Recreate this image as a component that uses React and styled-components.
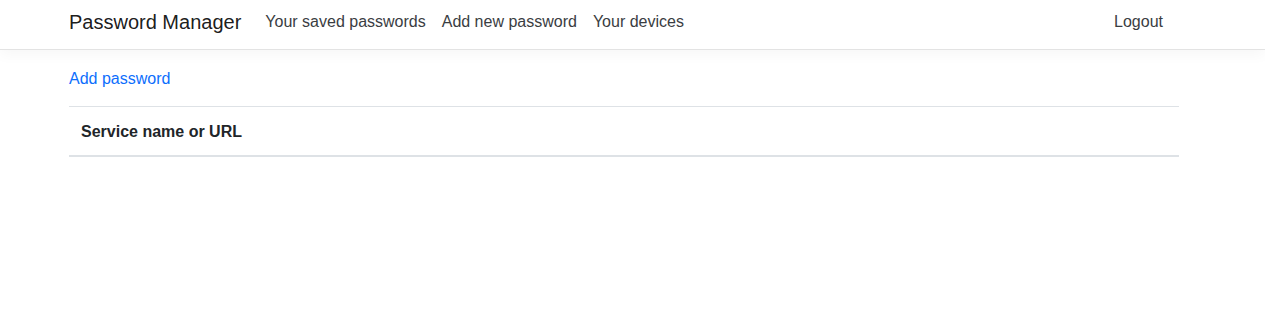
import React from 'react';
import styled, { createGlobalStyle } from 'styled-components';

const GlobalStyle = createGlobalStyle`
  html, body {
    margin: 0;
    padding: 0;
    background: #fff;
    font-family: "Liberation Sans", Arial, sans-serif;
    font-size: 16px;
    line-height: 1.5;
    color: #212529;
  }
  * { box-sizing: border-box; }
`;

const Header = styled.header`
  height: 50px;
  border-bottom: 1px solid #e3e3e3;
  box-shadow: 0 4px 14px rgba(0, 0, 0, 0.04);
  background: #fff;
`;

const Container = styled.div`
  width: 1110px;
  margin-left: 69px;
`;

const NavBar = styled(Container)`
  display: flex;
  align-items: center;
  height: 44px;
`;

const Brand = styled.a`
  font-size: 20px;
  line-height: 30px;
  color: rgba(0, 0, 0, 0.9);
  margin-right: 16px;
  text-decoration: none;
  cursor: pointer;
`;

const NavList = styled.ul`
  display: flex;
  list-style: none;
  margin: 0;
  padding: 0;
  flex: ${({ grow }) => (grow ? 1 : 'none')};
  justify-content: ${({ end }) => (end ? 'flex-end' : 'flex-start')};
  margin-right: ${({ end }) => (end ? '8px' : '0')};
`;

const NavLink = styled.a`
  display: block;
  padding: 0 8px;
  color: #3a3d42;
  text-decoration: none;
  cursor: pointer;
`;

const Main = styled(Container)`
  padding-top: 17px;
`;

const ActionLink = styled.a`
  display: inline-block;
  color: #0d6efd;
  text-decoration: none;
  cursor: pointer;
  margin-bottom: 15px;
`;

const Table = styled.table`
  width: 100%;
  border-collapse: collapse;
`;

const HeadCell = styled.th`
  text-align: left;
  font-weight: bold;
  padding: 13px 12px 11px;
  border-top: 1px solid #dee2e6;
  border-bottom: 2px solid #dee2e6;
`;

export default function App() {
  return (
    <>
      <GlobalStyle />
      <Header>
        <NavBar as="nav">
          <Brand>Password Manager</Brand>
          <NavList grow>
            <li><NavLink>Your saved passwords</NavLink></li>
            <li><NavLink>Add new password</NavLink></li>
            <li><NavLink>Your devices</NavLink></li>
          </NavList>
          <NavList end>
            <li><NavLink>Logout</NavLink></li>
          </NavList>
        </NavBar>
      </Header>
      <Main as="main">
        <ActionLink>Add password</ActionLink>
        <Table>
          <thead>
            <tr>
              <HeadCell>Service name or URL</HeadCell>
            </tr>
          </thead>
          <tbody />
        </Table>
      </Main>
    </>
  );
}
